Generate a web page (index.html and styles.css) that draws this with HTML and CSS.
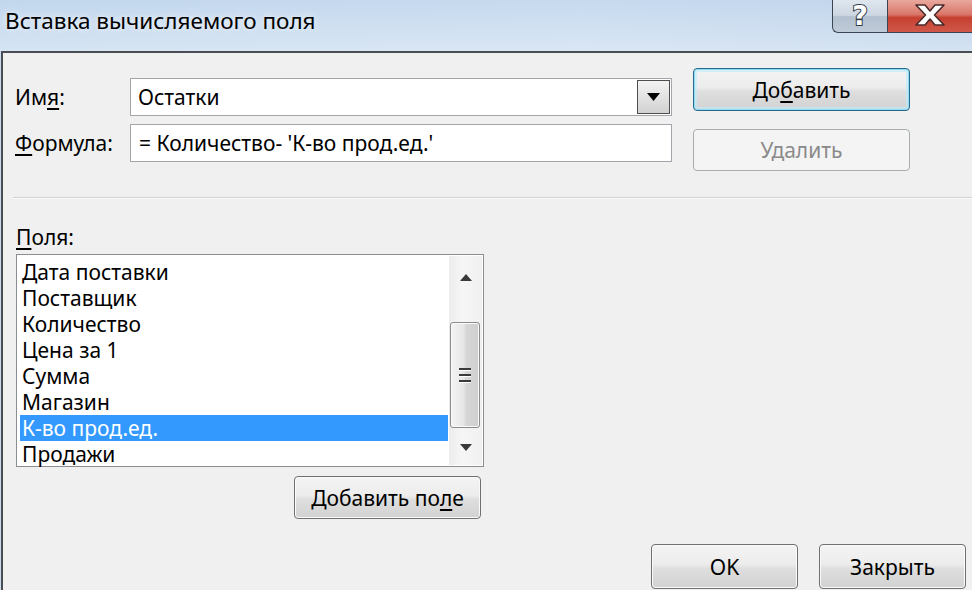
FILE: index.html
```html
<!DOCTYPE html>
<html lang="ru">
<head>
<meta charset="utf-8">
<title>Вставка вычисляемого поля</title>
<link rel="stylesheet" href="styles.css">
</head>
<body>
<div class="window">
  <div class="titlebar">
    <div class="title">Вставка вычисляемого поля</div>
    <div class="caption">
      <div class="cap-btn help"><span class="help-glyph">?</span></div>
      <div class="cap-btn close">
        <svg class="close-glyph" width="36" height="24" viewBox="0 0 36 24">
          <path d="M4 2 H13 L18 8 L23 2 H32 L22.5 12 L32 22 H23 L18 16 L13 22 H4 L13.5 12 Z" fill="#ffffff" stroke="#4a2a2a" stroke-width="1.6" stroke-linejoin="round"/>
        </svg>
      </div>
    </div>
  </div>
  <div class="client">
    <div class="top">
      <div class="fields">
        <div class="lbl">Им<u>я</u>:</div>
        <div class="combo">
          <span class="val">Остатки</span>
          <span class="drop"><svg width="13" height="8" viewBox="0 0 13 8"><path d="M0 0 H13 L6.5 8 Z" fill="#000"/></svg></span>
        </div>
        <div class="lbl"><u>Ф</u>ормула:</div>
        <div class="textbox">= Количество- 'К-во прод.ед.'</div>
      </div>
      <div class="actions">
        <button class="btn btn-default">До<u>б</u>авить</button>
        <button class="btn btn-disabled">Удалить</button>
      </div>
    </div>
    <div class="sep"></div>
    <div class="bottom">
      <div class="lbl fields-lbl"><u>П</u>оля:</div>
      <div class="listbox">
        <ul class="items">
          <li>Дата поставки</li>
          <li>Поставщик</li>
          <li>Количество</li>
          <li>Цена за 1</li>
          <li>Сумма</li>
          <li>Магазин</li>
          <li class="selected">К-во прод.ед.</li>
          <li>Продажи</li>
        </ul>
        <div class="scrollbar">
          <div class="sb-up"><svg width="12" height="7" viewBox="0 0 12 7"><path d="M6 0 L12 7 H0 Z" fill="#3a3a3a"/></svg></div>
          <div class="sb-track">
            <div class="sb-thumb">
              <div class="grip"><i></i><i></i><i></i></div>
            </div>
          </div>
          <div class="sb-down"><svg width="12" height="7" viewBox="0 0 12 7"><path d="M0 0 H12 L6 7 Z" fill="#3a3a3a"/></svg></div>
        </div>
      </div>
      <div class="addfield-row">
        <button class="btn btn-addfield">Добавить по<u>л</u>е</button>
      </div>
    </div>
    <div class="footer">
      <button class="btn btn-ok">OK</button>
      <button class="btn btn-close">Закрыть</button>
    </div>
  </div>
</div>
</body>
</html>
```

FILE: styles.css
```css
* { box-sizing: border-box; }
html, body { margin: 0; padding: 0; }
body {
  width: 972px;
  height: 590px;
  overflow: hidden;
  font-family: "Noto Sans", "Open Sans", sans-serif;
  font-size: 21px;
  color: #000;
  background: #f0f0f0;
}
.window {
  width: 972px;
  height: 590px;
  display: flex;
  flex-direction: column;
  background: linear-gradient(to right, #c9dbee 0%, #d3e2f2 60%, #c5d6ea 100%);
}
.titlebar {
  height: 51px;
  display: flex;
  justify-content: space-between;
  align-items: flex-start;
  background: linear-gradient(to bottom, rgba(190,212,236,0.6), rgba(222,234,246,0.6));
}
.title {
  padding: 6px 0 0 5px;
  font-size: 22.5px;
  line-height: 30px;
  color: #000;
  text-shadow: 0 0 6px rgba(255,255,255,0.9);
}
.caption {
  display: flex;
}
.cap-btn {
  height: 33px;
  display: flex;
  align-items: center;
  justify-content: center;
  border: 1px solid #3b4452;
  border-top: none;
}
.help {
  width: 55px;
  border-right: none;
  border-bottom-left-radius: 6px;
  background: linear-gradient(to bottom, #dfe6ee 0%, #cdd7e2 48%, #b3c0cf 52%, #bfcbd8 100%);
}
.help-glyph {
  font-family: "DejaVu Sans", sans-serif;
  font-weight: bold;
  font-size: 27px;
  line-height: 32px;
  height: 32px;
  color: #fff;
  -webkit-text-stroke: 2px #333b46;
  paint-order: stroke fill;
}
.close {
  width: 85px;
  border-right: none;
  background: linear-gradient(to bottom, #e9a89d 0%, #d9776a 45%, #c64030 55%, #d0594a 100%);
}
.close-glyph { margin-top: -3px; }

.client {
  flex: 1;
  margin-left: 1px;
  border-top: 2px solid #4a4d52;
  border-left: 2px solid #4a4d52;
  background: #f0f0f0;
  display: flex;
  flex-direction: column;
}
.top {
  display: flex;
  align-items: flex-start;
}
.fields {
  display: grid;
  grid-template-columns: 115px 542px;
  row-gap: 8px;
  padding: 25px 0 0 12px;
  align-items: center;
}
.lbl {
  line-height: 26px;
}
u { text-decoration: underline; text-underline-offset: 3px; text-decoration-thickness: 2px; }
.combo {
  height: 38px;
  background: #fff;
  border: 1px solid #a3a5aa;
  display: flex;
  align-items: center;
  justify-content: space-between;
  padding: 1px;
}
.val { padding-left: 6px; }
.drop {
  width: 33px;
  height: 100%;
  border: 1px solid #4d4d4d;
  background: linear-gradient(to bottom, #f3f3f3, #e2e2e2 50%, #d2d2d2);
  display: flex;
  align-items: center;
  justify-content: center;
}
.textbox {
  height: 38px;
  background: #fff;
  border: 1px solid #a3a5aa;
  display: flex;
  align-items: center;
  padding-left: 8px;
  white-space: pre;
}
.actions {
  display: flex;
  flex-direction: column;
  gap: 18px;
  margin: 15px 0 0 21px;
}
.btn {
  font-family: inherit;
  font-size: 21px;
  color: #000;
  border: 1px solid #707070;
  border-radius: 4px;
  background: linear-gradient(to bottom, #f4f4f4 0%, #ececec 45%, #dedede 55%, #d2d2d2 100%);
  box-shadow: inset 0 0 0 1px #fafafa;
  padding: 0;
  display: flex;
  align-items: center;
  justify-content: center;
}
.btn-default, .btn-disabled {
  width: 217px;
  height: 43px;
}
.btn-default {
  border-color: #2c6a8c;
  box-shadow: inset 0 0 0 1px #8fdcf2, inset 0 0 0 3px rgba(190,235,248,0.6);
}
.btn-disabled {
  height: 42px;
  color: #8a8a8a;
  border-color: #a8adb1;
  background: #f4f4f4;
  box-shadow: none;
}
.sep {
  margin: 26px 0 0 10px;
  height: 2px;
  border-top: 1px solid #d2d2d2;
  border-bottom: 1px solid #fbfbfb;
}
.bottom {
  width: 481px;
  padding-left: 13px;
}
.fields-lbl {
  margin-top: 25px;
}
.listbox {
  margin-top: 4px;
  width: 468px;
  height: 213px;
  border: 1px solid #8a8d92;
  background: #fff;
  display: flex;
}
.items {
  flex: 1;
  list-style: none;
  margin: 0;
  padding: 4px 0 0 3px;
}
.items li {
  height: 26px;
  line-height: 26px;
  padding-left: 2px;
  white-space: nowrap;
}
.items li.selected {
  background: #3399ff;
  color: #fff;
  margin-right: 1px;
}
.scrollbar {
  width: 33px;
  margin: 1px 1px 1px 0;
  display: flex;
  flex-direction: column;
  background: linear-gradient(to right, #ececec, #f6f6f6 40%, #f0f0f0);
}
.sb-up {
  height: 44px;
  display: flex;
  align-items: center;
  justify-content: center;
}
.sb-track {
  flex: 1;
  padding: 23px 2px 1px 1px;
}
.sb-thumb {
  height: 106px;
  border: 1px solid #8b8b8b;
  border-radius: 3px;
  background: linear-gradient(to right, #f4f4f4, #e6e6e6 45%, #d6d6d6 55%, #cfcfcf);
  box-shadow: inset 0 0 0 1px #fbfbfb;
  display: flex;
  align-items: center;
  justify-content: center;
}
.grip {
  display: flex;
  flex-direction: column;
  gap: 3px;
}
.grip i {
  display: block;
  width: 12px;
  height: 2px;
  background: #3a3a3a;
  border-bottom: 1px solid #fff;
  box-sizing: content-box;
}
.sb-down {
  height: 36px;
  display: flex;
  align-items: center;
  justify-content: center;
}
.addfield-row {
  display: flex;
  justify-content: flex-end;
  width: 468px;
  padding-right: 3px;
  margin-top: 9px;
}
.btn-addfield {
  width: 187px;
  height: 43px;
}
.footer {
  display: flex;
  justify-content: flex-end;
  gap: 21px;
  margin-top: 25px;
  padding-right: 6px;
}
.btn-ok, .btn-close {
  width: 147px;
  height: 45px;
}
```
